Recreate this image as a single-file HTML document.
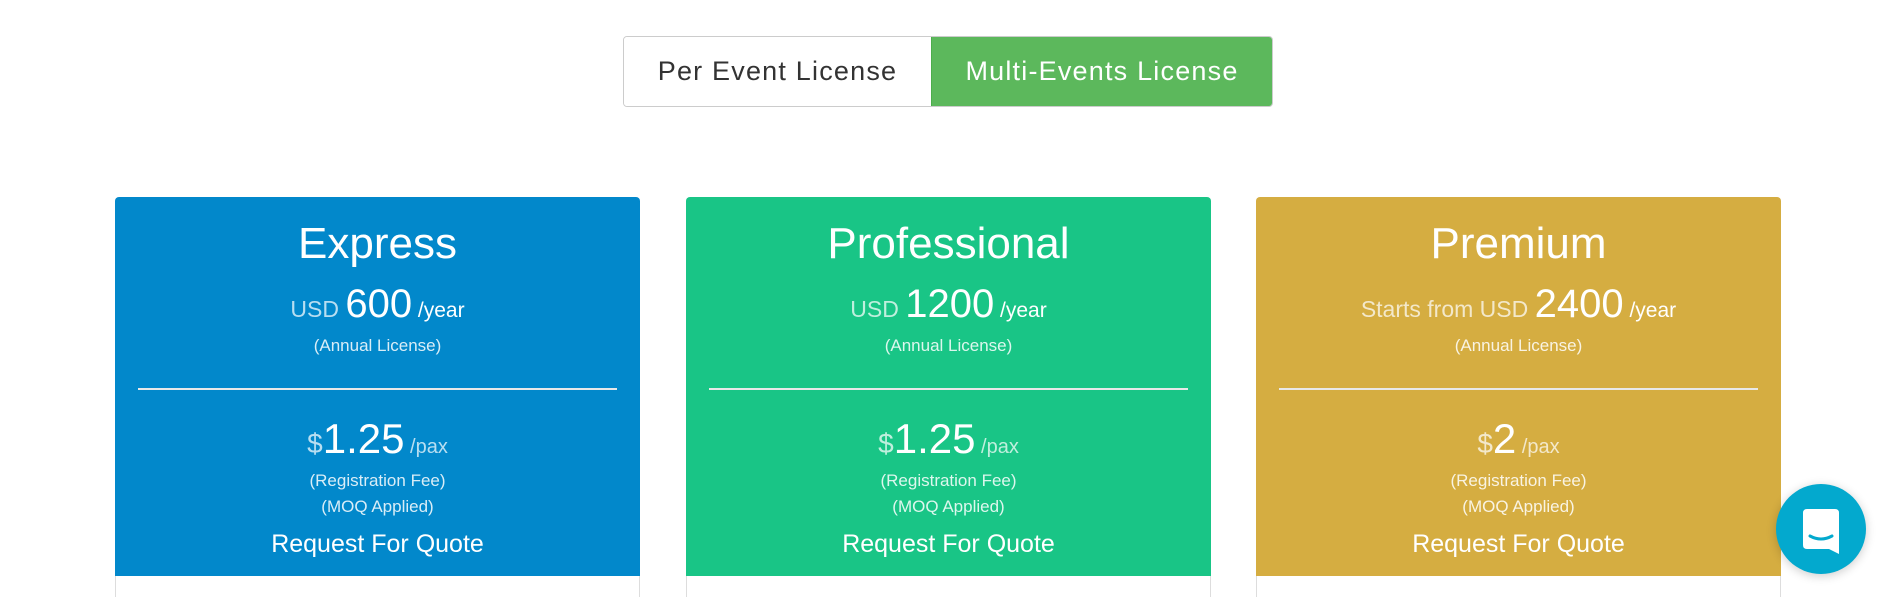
<!DOCTYPE html>
<html><head><meta charset="utf-8"><style>
*{box-sizing:border-box;margin:0;padding:0}
body{width:1886px;height:584px;background:#fff;position:relative;overflow:hidden;font-family:"Liberation Sans",sans-serif}
.tog{position:absolute;top:36px;left:623px;width:650px;height:71px;display:flex;border-radius:4px;overflow:hidden;border:1px solid #ccc}
.tog div{display:flex;align-items:center;justify-content:center;font-size:27px;letter-spacing:1.2px}
.a{width:307px;background:#fff;color:#333}
.b{flex:1;background:#5cb85c;color:#fff;border-left:1px solid #4cae4c}
.card{position:absolute;top:197px;width:525px;height:400px;border-radius:4px 4px 0 0;color:#fff;text-align:center}
.card .bot{position:absolute;top:379px;left:0;right:0;bottom:0;background:#fff;border-left:1px solid #ddd;border-right:1px solid #ddd}
.t{position:absolute;top:22px;width:100%;font-size:44px}
.p{position:absolute;top:85px;width:100%;font-size:40px}
.m{color:rgba(255,255,255,.72);font-size:23px}
.s{font-size:21px}
.al{position:absolute;top:139px;width:100%;font-size:17px;color:rgba(255,255,255,.85)}
.hr{position:absolute;top:191px;left:23px;right:23px;height:2px;background:#e8e8e8}
.q{position:absolute;top:218px;width:100%;font-size:42px}
.r{position:absolute;top:271px;width:100%;font-size:17px;line-height:26px;color:rgba(255,255,255,.85)}
.rq{position:absolute;top:333px;width:100%;font-size:25px}
.chat{position:absolute;left:1776px;top:484px;width:90px;height:90px;border-radius:50%;background:#03a9ce;box-shadow:0 2px 10px rgba(0,0,0,.2)}
</style></head><body>
<div class="tog"><div class="a">Per Event License</div><div class="b">Multi-Events License</div></div>

<div class="card" style="left:115px;background:#0288cb">
<div class="t">Express</div>
<div class="p"><span class="m">USD </span>600<span class="s"> /year</span></div>
<div class="al">(Annual License)</div><div class="hr"></div>
<div class="q"><span class="m" style="font-size:28px">$</span>1.25<span class="m" style="font-size:20px"> /pax</span></div>
<div class="r">(Registration Fee)<br>(MOQ Applied)</div>
<div class="rq">Request For Quote</div><div class="bot"></div></div>

<div class="card" style="left:686px;background:#19c586">
<div class="t">Professional</div>
<div class="p"><span class="m">USD </span>1200<span class="s"> /year</span></div>
<div class="al">(Annual License)</div><div class="hr"></div>
<div class="q"><span class="m" style="font-size:28px">$</span>1.25<span class="m" style="font-size:20px"> /pax</span></div>
<div class="r">(Registration Fee)<br>(MOQ Applied)</div>
<div class="rq">Request For Quote</div><div class="bot"></div></div>

<div class="card" style="left:1256px;background:#d5ad41">
<div class="t">Premium</div>
<div class="p"><span class="m">Starts from USD </span>2400<span class="s"> /year</span></div>
<div class="al">(Annual License)</div><div class="hr"></div>
<div class="q"><span class="m" style="font-size:28px">$</span>2<span class="m" style="font-size:20px"> /pax</span></div>
<div class="r">(Registration Fee)<br>(MOQ Applied)</div>
<div class="rq">Request For Quote</div><div class="bot"></div></div>

<div class="chat"><svg width="90" height="90" viewBox="0 0 90 90"><path d="M27 29 Q27 25 31 25 H59 Q63 25 63 29 V70 L53 65 H31 Q27 65 27 61 Z" fill="#fff"/><path d="M34 52 Q45 58 56 52" stroke="#03a9ce" stroke-width="3" fill="none" stroke-linecap="round"/></svg></div>
</body></html>
